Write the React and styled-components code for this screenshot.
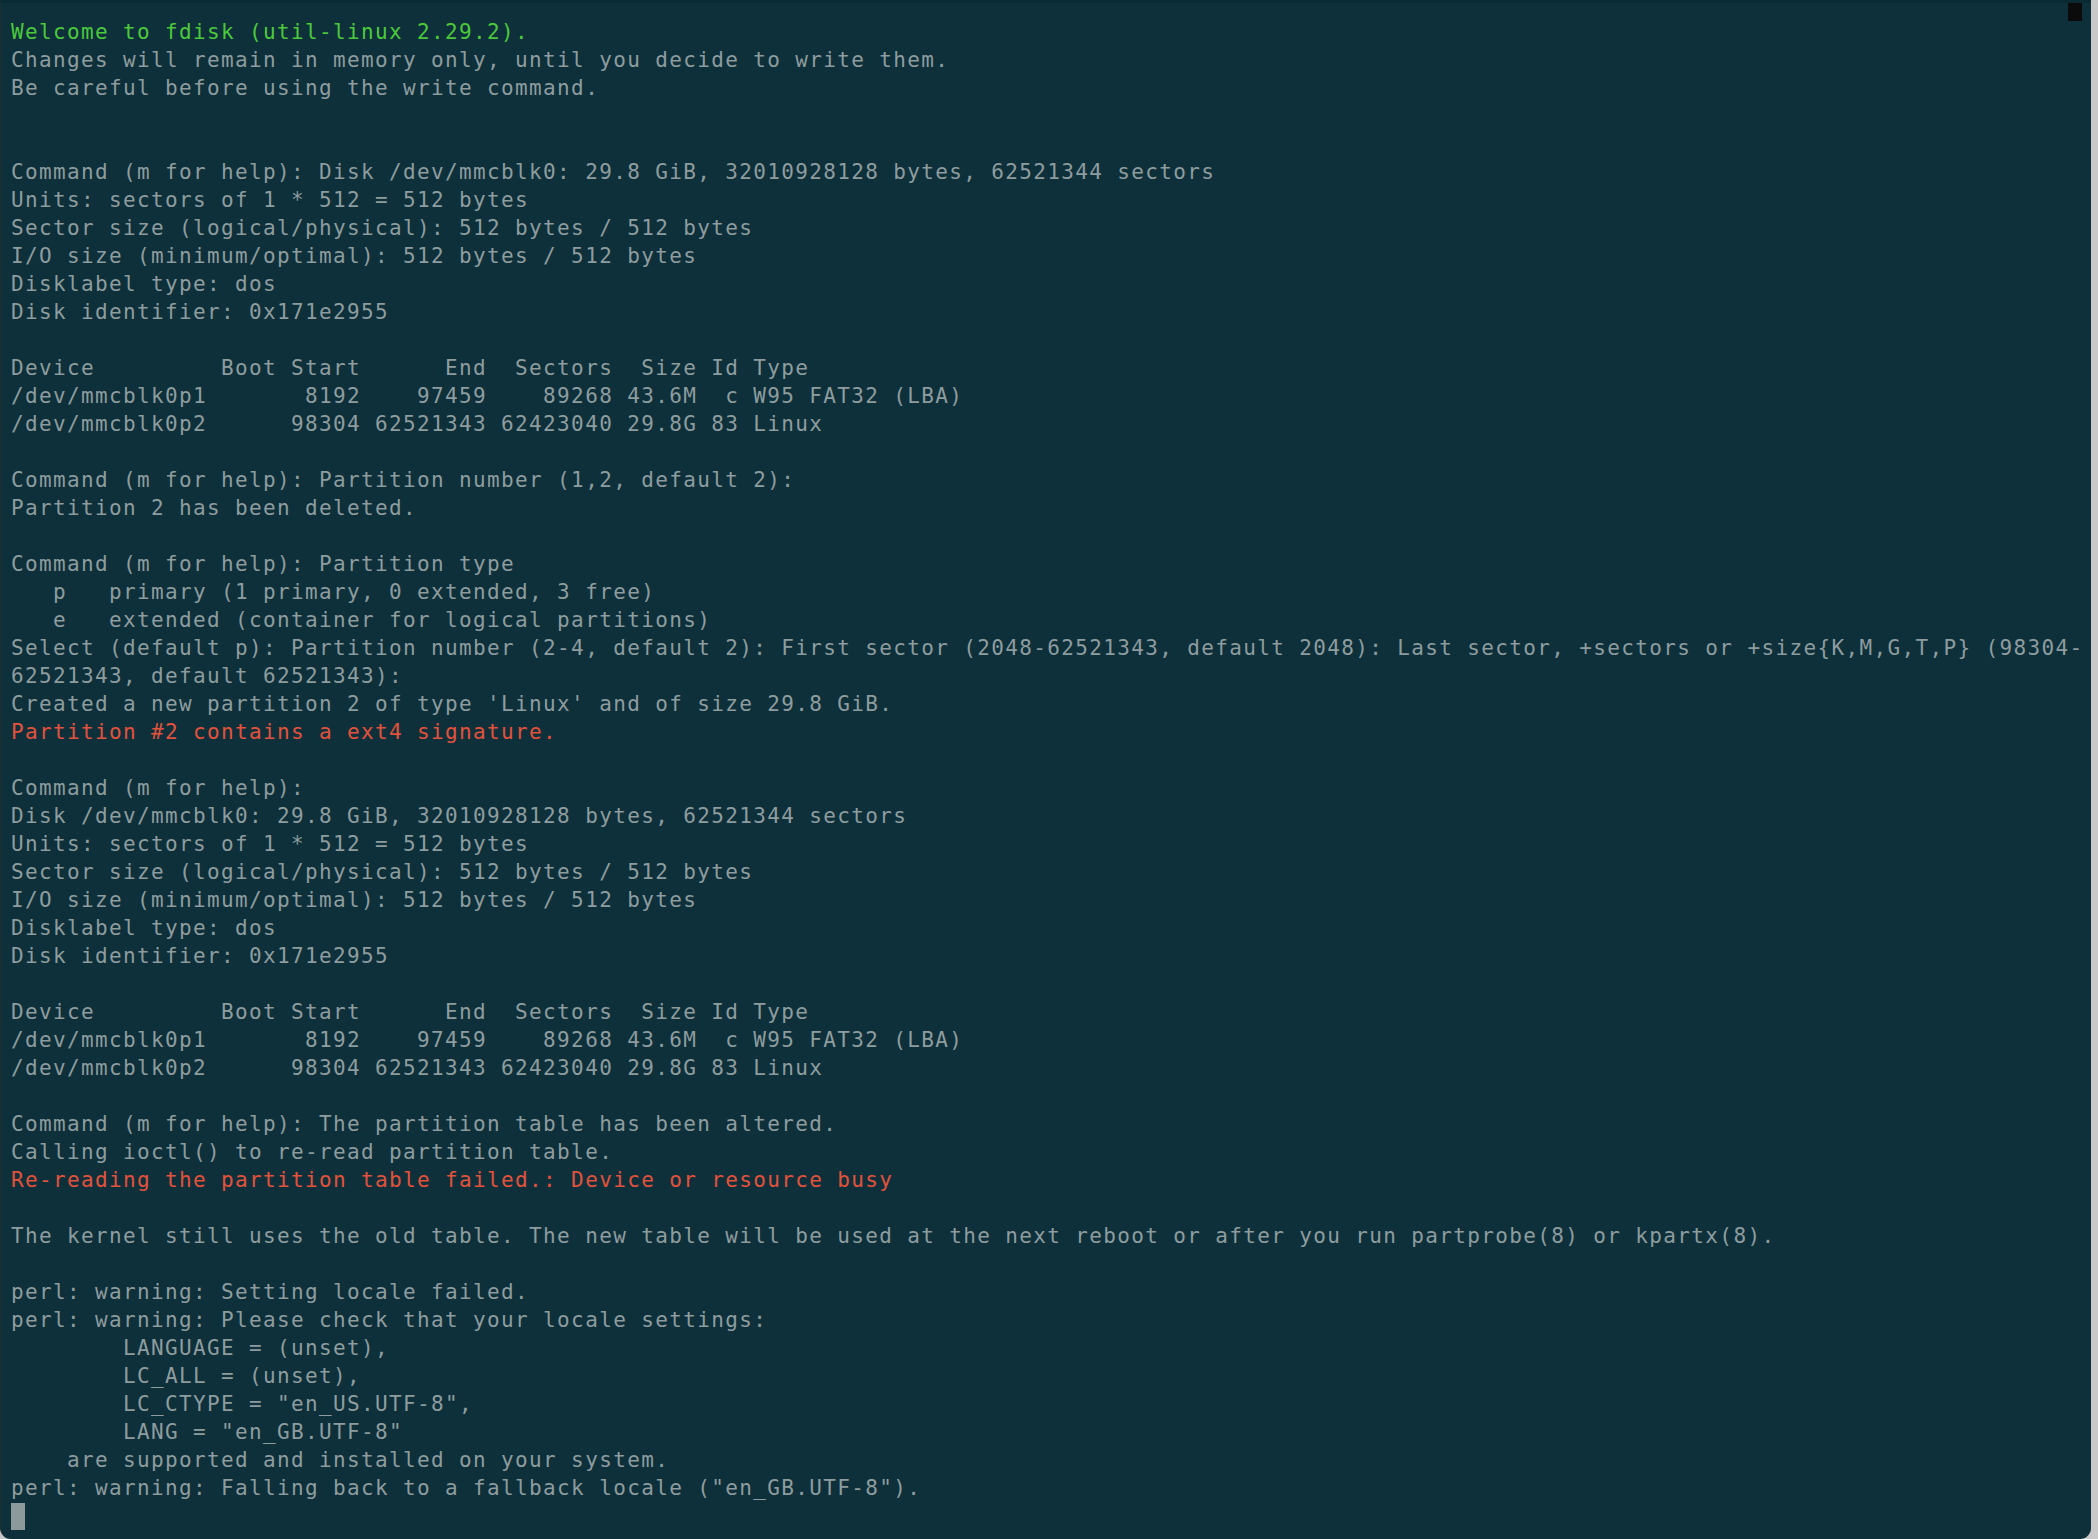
import React from "react";
import styled, { createGlobalStyle } from "styled-components";

const Global = createGlobalStyle`
  html, body {
    margin: 0;
    padding: 0;
    background: #c9c9c9;
    overflow: hidden;
  }
`;

const Window = styled.div`
  position: relative;
  width: 2091px;
  height: 1539px;
  box-sizing: border-box;
  background: #0d303b;
  border-top: 3px solid #0a2a33;
  border-left: 1px solid #1c2d33;
  border-radius: 0 0 11px 11px;
  overflow: hidden;
`;

const Screen = styled.div`
  display: flex;
  flex-direction: column;
  padding: 15px 0 0 10px;
  font-family: "DejaVu Sans Mono", "Liberation Mono", monospace;
  font-size: 21px;
  letter-spacing: 1.36px;
  line-height: 28px;
  color: #8e9c9e;
`;

const Line = styled.div`
  height: 28px;
  white-space: pre;
  color: ${(p) =>
    p.tone === "ok" ? "#4cc93a" : p.tone === "err" ? "#e2523c" : "#8e9c9e"};
`;

const Cursor = styled.span`
  display: inline-block;
  width: 14px;
  height: 27px;
  margin-top: 1px;
  background: #8c9a9c;
`;

const ScrollMark = styled.div`
  position: absolute;
  top: 0;
  right: 9px;
  width: 14px;
  height: 18px;
  background: #0b0b0b;
`;

const lines = [
  ["ok", "Welcome to fdisk (util-linux 2.29.2)."],
  ["", "Changes will remain in memory only, until you decide to write them."],
  ["", "Be careful before using the write command."],
  ["", ""],
  ["", ""],
  ["", "Command (m for help): Disk /dev/mmcblk0: 29.8 GiB, 32010928128 bytes, 62521344 sectors"],
  ["", "Units: sectors of 1 * 512 = 512 bytes"],
  ["", "Sector size (logical/physical): 512 bytes / 512 bytes"],
  ["", "I/O size (minimum/optimal): 512 bytes / 512 bytes"],
  ["", "Disklabel type: dos"],
  ["", "Disk identifier: 0x171e2955"],
  ["", ""],
  ["", "Device         Boot Start      End  Sectors  Size Id Type"],
  ["", "/dev/mmcblk0p1       8192    97459    89268 43.6M  c W95 FAT32 (LBA)"],
  ["", "/dev/mmcblk0p2      98304 62521343 62423040 29.8G 83 Linux"],
  ["", ""],
  ["", "Command (m for help): Partition number (1,2, default 2): "],
  ["", "Partition 2 has been deleted."],
  ["", ""],
  ["", "Command (m for help): Partition type"],
  ["", "   p   primary (1 primary, 0 extended, 3 free)"],
  ["", "   e   extended (container for logical partitions)"],
  ["", "Select (default p): Partition number (2-4, default 2): First sector (2048-62521343, default 2048): Last sector, +sectors or +size{K,M,G,T,P} (98304-"],
  ["", "62521343, default 62521343): "],
  ["", "Created a new partition 2 of type 'Linux' and of size 29.8 GiB."],
  ["err", "Partition #2 contains a ext4 signature."],
  ["", ""],
  ["", "Command (m for help): "],
  ["", "Disk /dev/mmcblk0: 29.8 GiB, 32010928128 bytes, 62521344 sectors"],
  ["", "Units: sectors of 1 * 512 = 512 bytes"],
  ["", "Sector size (logical/physical): 512 bytes / 512 bytes"],
  ["", "I/O size (minimum/optimal): 512 bytes / 512 bytes"],
  ["", "Disklabel type: dos"],
  ["", "Disk identifier: 0x171e2955"],
  ["", ""],
  ["", "Device         Boot Start      End  Sectors  Size Id Type"],
  ["", "/dev/mmcblk0p1       8192    97459    89268 43.6M  c W95 FAT32 (LBA)"],
  ["", "/dev/mmcblk0p2      98304 62521343 62423040 29.8G 83 Linux"],
  ["", ""],
  ["", "Command (m for help): The partition table has been altered."],
  ["", "Calling ioctl() to re-read partition table."],
  ["err", "Re-reading the partition table failed.: Device or resource busy"],
  ["", ""],
  ["", "The kernel still uses the old table. The new table will be used at the next reboot or after you run partprobe(8) or kpartx(8)."],
  ["", ""],
  ["", "perl: warning: Setting locale failed."],
  ["", "perl: warning: Please check that your locale settings:"],
  ["", "        LANGUAGE = (unset),"],
  ["", "        LC_ALL = (unset),"],
  ["", "        LC_CTYPE = \"en_US.UTF-8\","],
  ["", "        LANG = \"en_GB.UTF-8\""],
  ["", "    are supported and installed on your system."],
  ["", "perl: warning: Falling back to a fallback locale (\"en_GB.UTF-8\")."],
];

export default function App() {
  return (
    <>
      <Global />
      <Window>
        <ScrollMark />
        <Screen>
          {lines.map(([tone, text], i) => (
            <Line key={i} tone={tone}>
              {text}
            </Line>
          ))}
          <Line>
            <Cursor />
          </Line>
        </Screen>
      </Window>
    </>
  );
}
